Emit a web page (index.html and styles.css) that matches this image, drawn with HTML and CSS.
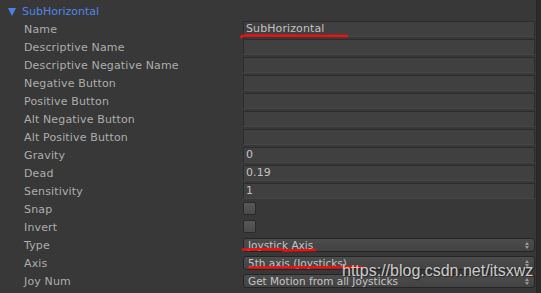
FILE: index.html
```html
<!DOCTYPE html>
<html>
<head>
  <meta charset="utf-8">
  <title>SubHorizontal</title>
  <link rel="stylesheet" href="styles.css">
</head>
<body>
  <div class="inspector">
    <div class="panel">
      <div class="header">
        <span class="arrow"></span>
        <span class="title">SubHorizontal</span>
      </div>

      <div class="row"><span class="label">Name</span><div class="field">SubHorizontal</div></div>
      <div class="row"><span class="label">Descriptive Name</span><div class="field"></div></div>
      <div class="row"><span class="label">Descriptive Negative Name</span><div class="field"></div></div>
      <div class="row"><span class="label">Negative Button</span><div class="field"></div></div>
      <div class="row"><span class="label">Positive Button</span><div class="field"></div></div>
      <div class="row"><span class="label">Alt Negative Button</span><div class="field"></div></div>
      <div class="row"><span class="label">Alt Positive Button</span><div class="field"></div></div>
      <div class="row"><span class="label">Gravity</span><div class="field">0</div></div>
      <div class="row"><span class="label">Dead</span><div class="field">0.19</div></div>
      <div class="row"><span class="label">Sensitivity</span><div class="field">1</div></div>
      <div class="row"><span class="label">Snap</span><div class="check"></div></div>
      <div class="row"><span class="label">Invert</span><div class="check"></div></div>
      <div class="row"><span class="label">Type</span><div class="popup">Joystick Axis<span class="updown"></span></div></div>
      <div class="row"><span class="label">Axis</span><div class="popup">5th axis (Joysticks)<span class="updown"></span></div></div>
      <div class="row"><span class="label">Joy Num</span><div class="popup">Get Motion from all Joysticks<span class="updown"></span></div></div>
    </div>
    <div class="scroll-edge"></div>
  </div>

  <!-- hand drawn annotations over the screenshot -->
  <svg class="marks" width="541" height="293">
    <path d="M241 37 Q242 35 250 35.5 L347 36" />
    <path d="M243 249.5 L280 249 L284 250.5 L315 250" />
    <path d="M249 267.5 L362 267" />
  </svg>
  <div class="watermark">https://blog.csdn.net/itsxwz</div>
</body>
</html>
```

FILE: styles.css
```css
body {
  margin: 0;
  background-color: #383838;
  font-family: "DejaVu Sans", sans-serif;
  font-size: 11px;
  color: #adadad;
  width: 541px;
  height: 293px;
  overflow: hidden;
}
.inspector {
  display: flex;
  height: 293px;
}
.panel {
  flex: 1;
  padding-top: 3px;
}
.scroll-edge {
  width: 4px;
  background-color: #2b2b2b;
  border-left: 1px solid #242424;
}
.header {
  display: flex;
  align-items: center;
  height: 17px;
  padding-left: 8px;
}
.arrow {
  width: 0;
  height: 0;
  border-left: 4px solid transparent;
  border-right: 4px solid transparent;
  border-top: 8px solid #4b80e4;
  margin-right: 6px;
  margin-top: 1px;
}
.title {
  color: #5185e8;
  font-size: 11px;
}
.row {
  display: flex;
  align-items: center;
  height: 18px;
}
.label {
  width: 219px;
  padding-left: 24px;
  white-space: nowrap;
  letter-spacing: 0.15px;
}
.field {
  flex: 1;
  height: 14px;
  margin-right: 1px;
  background-color: #404040;
  border: 1px solid #2c2c2c;
  border-bottom-color: #464646;
  color: #c2c2c2;
  line-height: 14px;
  padding-left: 2px;
  letter-spacing: 0.1px;
}
.check {
  width: 11px;
  height: 11px;
  margin-top: -2px;
  background: linear-gradient(#585858, #4a4a4a);
  border: 1px solid #2a2a2a;
  border-radius: 2px;
}
.popup {
  flex: 1;
  position: relative;
  height: 12px;
  margin-right: 1px;
  background: linear-gradient(#4c4c4c, #434343);
  border: 1px solid #252525;
  border-radius: 3px;
  color: #c4c4c4;
  font-size: 10.5px;
  line-height: 12px;
  padding-left: 4px;
}
.updown {
  position: absolute;
  right: 5px;
  top: 3px;
  width: 0;
  height: 0;
  border-left: 2px solid transparent;
  border-right: 2px solid transparent;
  border-bottom: 3px solid #9a9a9a;
}
.updown::after {
  content: "";
  position: absolute;
  left: -2px;
  top: 4px;
  border-left: 2px solid transparent;
  border-right: 2px solid transparent;
  border-top: 3px solid #9a9a9a;
}
.marks {
  position: absolute;
  left: 0;
  top: 0;
}
.marks path {
  fill: none;
  stroke: #f01010;
  stroke-width: 2.5;
  stroke-linecap: round;
}
.watermark {
  position: absolute;
  left: 342px;
  top: 262px;
  font-family: "Liberation Sans", sans-serif;
  font-size: 16px;
  color: #e4e4e4;
  text-shadow: 1px 1px 1px #222;
  opacity: 0.85;
}
```
